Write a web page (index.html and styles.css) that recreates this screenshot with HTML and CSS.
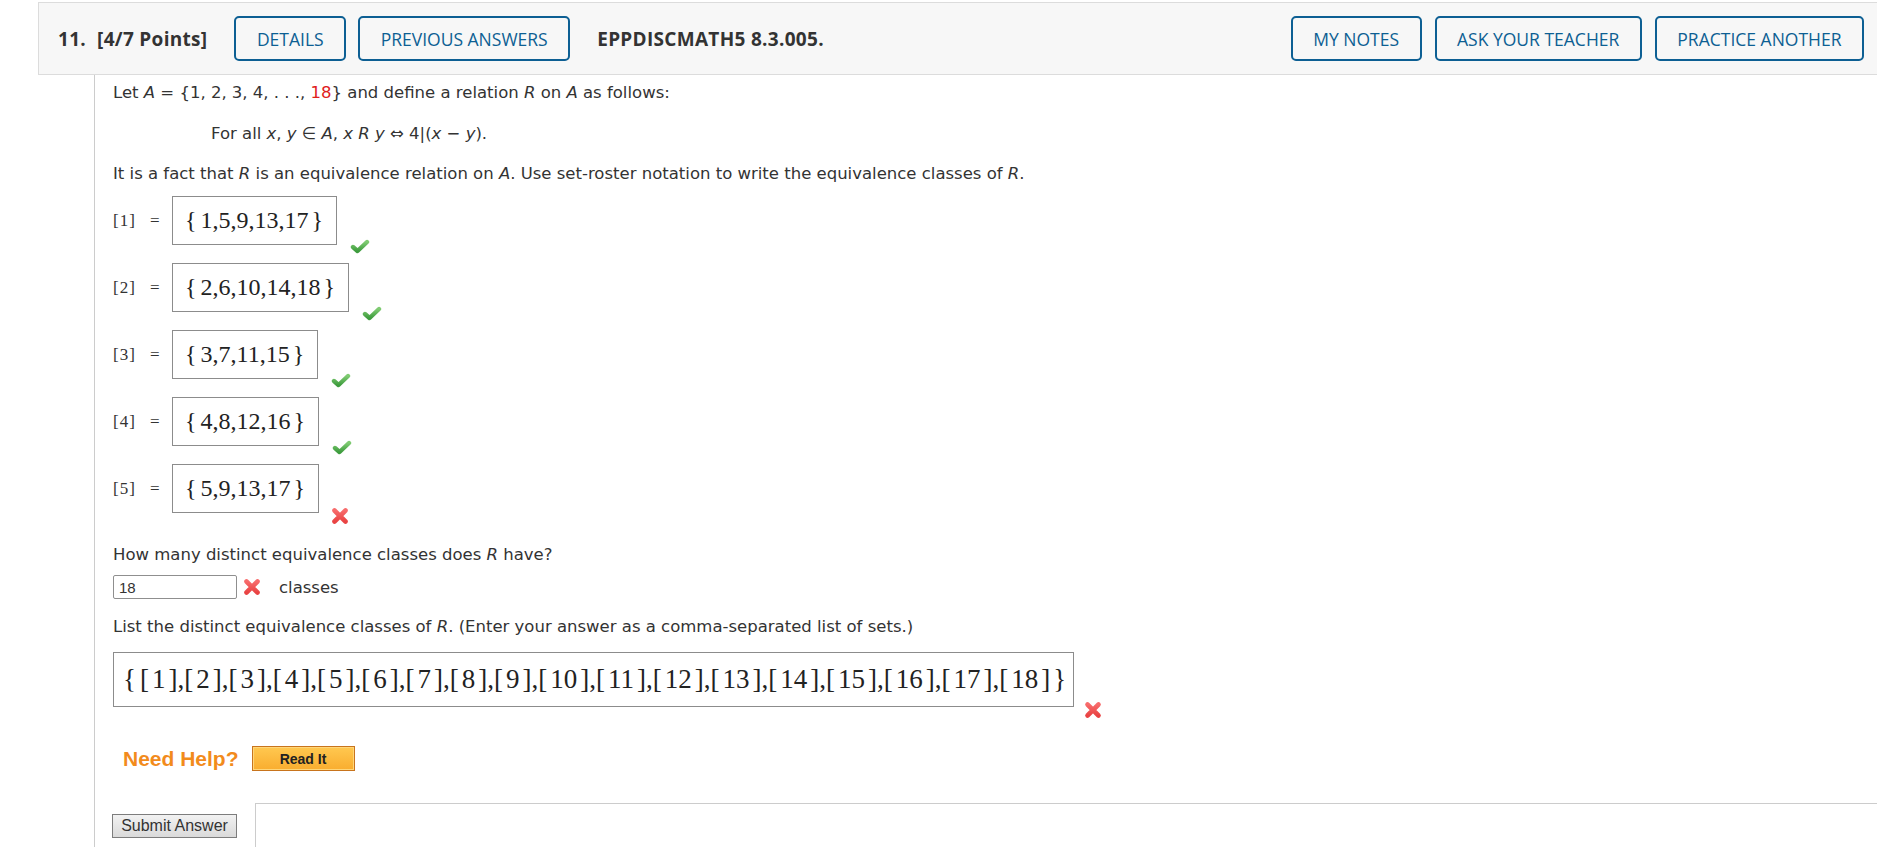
FILE: index.html
```html
<!DOCTYPE html>
<html>
<head>
<meta charset="utf-8">
<title>Question 11</title>
<link rel="stylesheet" href="styles.css">
</head>
<body>
<div class="q">
  <div class="qhead">
    <div class="qnum"><span class="num">11.</span><span>[4/7 Points]</span></div>
    <div class="btn btn-details">DETAILS</div>
    <div class="btn btn-prev">PREVIOUS ANSWERS</div>
    <div class="code">EPPDISCMATH5 8.3.005.</div>
    <div class="right">
      <div class="btn">MY NOTES</div>
      <div class="btn">ASK YOUR TEACHER</div>
      <div class="btn">PRACTICE ANOTHER</div>
    </div>
  </div>
  <div class="qbody">
    <p class="line l1">Let <i>A</i> = {1, 2, 3, 4, . . ., <span class="red">18</span>} and define a relation <i>R</i> on <i>A</i> as follows:</p>
    <p class="line l2 indent">For all <i>x</i>, <i>y</i> ∈ <i>A</i>, <i>x</i> <i>R</i> <i>y</i> ⇔ 4|(<i>x</i> − <i>y</i>).</p>
    <p class="line l3">It is a fact that <i>R</i> is an equivalence relation on <i>A</i>. Use set-roster notation to write the equivalence classes of <i>R</i>.</p>

    <div class="rows">
      <div class="row">
        <span class="lbl">[1]</span><span class="eq">=</span>
        <div class="setbox"><span class="bl">{</span>1,5,9,13,17<span class="br">}</span></div>
        <svg class="ok" width="20" height="15" viewBox="0 0 20 15"><defs><linearGradient id="g1" x1="0" y1="0" x2="0" y2="1"><stop offset="0" stop-color="#7fcb72"/><stop offset="1" stop-color="#3e9c3e"/></linearGradient></defs><polyline points="3,8 7.5,12 17,3" fill="none" stroke="url(#g1)" stroke-width="4.4" stroke-linecap="round" stroke-linejoin="round"/></svg>
      </div>
      <div class="row">
        <span class="lbl">[2]</span><span class="eq">=</span>
        <div class="setbox"><span class="bl">{</span>2,6,10,14,18<span class="br">}</span></div>
        <svg class="ok" width="20" height="15" viewBox="0 0 20 15"><polyline points="3,8 7.5,12 17,3" fill="none" stroke="url(#g1)" stroke-width="4.4" stroke-linecap="round" stroke-linejoin="round"/></svg>
      </div>
      <div class="row">
        <span class="lbl">[3]</span><span class="eq">=</span>
        <div class="setbox"><span class="bl">{</span>3,7,11,15<span class="br">}</span></div>
        <svg class="ok" width="20" height="15" viewBox="0 0 20 15"><polyline points="3,8 7.5,12 17,3" fill="none" stroke="url(#g1)" stroke-width="4.4" stroke-linecap="round" stroke-linejoin="round"/></svg>
      </div>
      <div class="row">
        <span class="lbl">[4]</span><span class="eq">=</span>
        <div class="setbox"><span class="bl">{</span>4,8,12,16<span class="br">}</span></div>
        <svg class="ok" width="20" height="15" viewBox="0 0 20 15"><polyline points="3,8 7.5,12 17,3" fill="none" stroke="url(#g1)" stroke-width="4.4" stroke-linecap="round" stroke-linejoin="round"/></svg>
      </div>
      <div class="row">
        <span class="lbl">[5]</span><span class="eq">=</span>
        <div class="setbox"><span class="bl">{</span>5,9,13,17<span class="br">}</span></div>
        <svg class="bad bad-set" width="18" height="18" viewBox="0 0 18 18"><defs><linearGradient id="g2" x1="0" y1="0" x2="0" y2="1"><stop offset="0" stop-color="#f76b6b"/><stop offset="1" stop-color="#e94343"/></linearGradient></defs><path d="M3.5 3.5 L14.5 14.5 M14.5 3.5 L3.5 14.5" stroke="url(#g2)" stroke-width="4.6" stroke-linecap="round"/></svg>
      </div>
    </div>

    <p class="line q2">How many distinct equivalence classes does <i>R</i> have?</p>
    <div class="ansrow">
      <input class="ans" type="text" value="18" readonly>
      <svg class="bad" width="18" height="18" viewBox="0 0 18 18"><path d="M3.5 3.5 L14.5 14.5 M14.5 3.5 L3.5 14.5" stroke="url(#g2)" stroke-width="4.6" stroke-linecap="round"/></svg>
      <span class="unit">classes</span>
    </div>

    <p class="line q3">List the distinct equivalence classes of <i>R</i>. (Enter your answer as a comma-separated list of sets.)</p>
    <div class="bigrow">
      <div class="bigbox"><span class="bl">{</span><span class="ob">[</span>1<span class="cb">]</span>,<span class="ob">[</span>2<span class="cb">]</span>,<span class="ob">[</span>3<span class="cb">]</span>,<span class="ob">[</span>4<span class="cb">]</span>,<span class="ob">[</span>5<span class="cb">]</span>,<span class="ob">[</span>6<span class="cb">]</span>,<span class="ob">[</span>7<span class="cb">]</span>,<span class="ob">[</span>8<span class="cb">]</span>,<span class="ob">[</span>9<span class="cb">]</span>,<span class="ob">[</span>10<span class="cb">]</span>,<span class="ob">[</span>11<span class="cb">]</span>,<span class="ob">[</span>12<span class="cb">]</span>,<span class="ob">[</span>13<span class="cb">]</span>,<span class="ob">[</span>14<span class="cb">]</span>,<span class="ob">[</span>15<span class="cb">]</span>,<span class="ob">[</span>16<span class="cb">]</span>,<span class="ob">[</span>17<span class="cb">]</span>,<span class="ob">[</span>18<span class="cb">]</span><span class="br">}</span></div>
      <svg class="bad bad-big" width="18" height="18" viewBox="0 0 18 18"><path d="M3.5 3.5 L14.5 14.5 M14.5 3.5 L3.5 14.5" stroke="url(#g2)" stroke-width="4.6" stroke-linecap="round"/></svg>
    </div>

    <div class="help">
      <span class="needhelp">Need Help?</span>
      <span class="readit">Read It</span>
    </div>

    <div class="submitrow">
      <span class="submit">Submit Answer</span>
      <div class="resp"></div>
    </div>
  </div>
</div>
</body>
</html>
```
FILE: styles.css
```css
html, body {
  margin: 0;
  padding: 0;
  background: #fff;
}
body {
  padding-top: 2px;
  font-family: "DejaVu Sans", Verdana, sans-serif;
  font-size: 16.5px;
  color: #333;
  overflow: hidden;
}
.q {
  margin-left: 38px;
}
.qhead {
  display: flex;
  align-items: center;
  height: 71px;
  background: #f7f7f7;
  border: 1px solid #dcdcdc;
  border-right: 0;
  padding: 0 13px 0 19px;
  font-family: "Open Sans", sans-serif;
}
.qnum {
  font-size: 19px;
  font-weight: 700;
  letter-spacing: 0.3px;
  color: #333;
  white-space: nowrap;
}
.qnum .num {
  margin-right: 11px;
}
.btn {
  display: flex;
  align-items: center;
  height: 45px;
  box-sizing: border-box;
  padding: 0 20.5px;
  border: 2px solid #0d5f93;
  border-radius: 5px;
  color: #0d5f93;
  font-size: 17.5px;
  white-space: nowrap;
}
.btn-details { margin-left: 27px; }
.btn-prev { margin-left: 12px; }
.code {
  margin-left: 27px;
  font-size: 19px;
  font-weight: 700;
  letter-spacing: 0.3px;
  color: #333;
  white-space: nowrap;
}
.right {
  margin-left: auto;
  display: flex;
  gap: 13px;
}
.qbody {
  margin-left: 56px;
  border-left: 1px solid #cccccc;
  padding: 8px 0 40px 18px;
}
.line {
  margin: 0;
  line-height: 20px;
}
.l2 { margin-top: 21px; }
.l3 { margin-top: 20px; }
.indent { padding-left: 98px; }
.red { color: #e0201b; }

.rows {
  display: flex;
  flex-direction: column;
  gap: 18px;
  margin-top: 12px;
}
.row {
  display: flex;
  align-items: center;
}
.lbl, .eq {
  font-family: "Liberation Serif", serif;
  font-size: 17px;
  color: #333;
}
.lbl { width: 37px; letter-spacing: 1px; }
.eq { width: 22px; }
.setbox {
  display: flex;
  align-items: center;
  height: 49px;
  box-sizing: border-box;
  border: 1px solid #8c8c8c;
  padding: 0 13px 0 12px;
  font-family: "Liberation Serif", serif;
  font-size: 24px;
  color: #222;
}
.bl { margin-right: 4px; }
.br { margin-left: 3px; }
.ok {
  align-self: flex-end;
  margin-left: 13px;
  margin-bottom: -9px;
}
.bad-set {
  align-self: flex-end;
  margin-left: 12px;
  margin-bottom: -12px;
}
.q2 { margin-top: 32px; }
.ansrow {
  display: flex;
  align-items: center;
  margin-top: 10px;
}
.ans {
  width: 124px;
  height: 24px;
  box-sizing: border-box;
  margin: 0;
  border: 1px solid #8f8f8f;
  border-radius: 2px;
  padding: 0 5px;
  font-family: "Liberation Sans", Arial, sans-serif;
  font-size: 15px;
  color: #333;
  background: #fff;
  outline: none;
}
.ansrow .bad { margin-left: 6px; }
.unit { margin-left: 18px; }
.q3 { margin-top: 18px; }
.bigrow {
  display: flex;
  align-items: center;
  margin-top: 15px;
}
.bigbox {
  display: flex;
  align-items: center;
  width: 961px;
  height: 55px;
  box-sizing: border-box;
  border: 1px solid #8c8c8c;
  padding: 0 9px;
  font-family: "Liberation Serif", serif;
  font-size: 27px;
  color: #222;
  white-space: nowrap;
}
.ob { margin-right: 3px; }
.cb { margin-left: 3px; }
.bad-big {
  align-self: flex-end;
  margin-left: 10px;
  margin-bottom: -12px;
}
.help {
  display: flex;
  align-items: center;
  margin-top: 39px;
  padding-left: 10px;
}
.needhelp {
  font-family: "Liberation Sans", Arial, sans-serif;
  font-weight: bold;
  font-size: 21px;
  color: #f28b1c;
}
.readit {
  margin-left: 13px;
  display: flex;
  align-items: center;
  justify-content: center;
  width: 103px;
  height: 25px;
  box-sizing: border-box;
  border: 1px solid #c8741d;
  box-shadow: inset 0 0 0 1px #ffd679;
  background: linear-gradient(#ffc850, #f9ad2f);
  font-family: "Liberation Sans", Arial, sans-serif;
  font-weight: bold;
  font-size: 14px;
  color: #222;
}
.submitrow {
  display: flex;
  align-items: flex-start;
  margin-top: 32px;
  margin-left: -1px;
}
.submit {
  margin-top: 11px;
  display: flex;
  align-items: center;
  justify-content: center;
  width: 125px;
  height: 24px;
  box-sizing: border-box;
  border: 1px solid #7d7d7d;
  background: linear-gradient(#f2f2f2, #dadada);
  font-family: "Liberation Sans", Arial, sans-serif;
  font-size: 16px;
  color: #333;
}
.resp {
  flex: 1;
  margin-left: 18px;
  height: 60px;
  border-top: 1px solid #cccccc;
  border-left: 1px solid #cccccc;
}
```
